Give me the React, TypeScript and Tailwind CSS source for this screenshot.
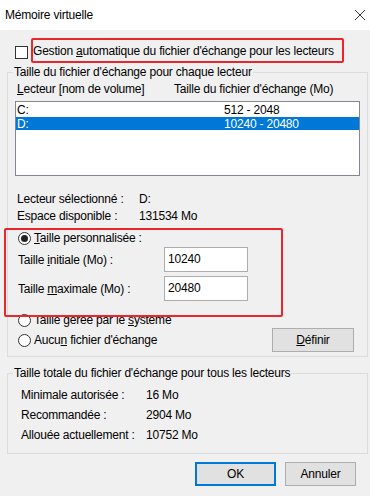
import React from 'react';

const font = "font-['Segoe_UI','Liberation_Sans',sans-serif]";

function Radio({ checked }: { checked?: boolean }) {
  return (
    <span className="flex h-[13px] w-[13px] shrink-0 items-center justify-center rounded-full border border-[#333] bg-white">
      {checked && <span className="h-[7px] w-[7px] rounded-full bg-[#222]" />}
    </span>
  );
}

function Button({ children, primary, w }: { children: React.ReactNode; primary?: boolean; w?: string }) {
  return (
    <button
      className={
        primary
          ? 'flex h-[24px] w-[81px] items-center justify-center border-2 border-[#0078d7] bg-[#e1e1e1] text-[12px]'
          : `flex h-[24px] items-center justify-center border border-[#adadad] bg-[#e1e1e1] text-[12px] ${w ?? 'w-[71px]'}`
      }
    >
      {children}
    </button>
  );
}

export default function App() {
  return (
    <div className={`${font} relative h-[496px] w-[370px] overflow-hidden bg-[#f0f0f0] text-[12px] leading-[16px] tracking-[-0.2px] text-black`}>
      {/* title bar */}
      <div className="flex h-[30px] items-center justify-between bg-white pl-[5px] pr-[4px]">
        <span>Mémoire virtuelle</span>
        <svg width="12" height="12" viewBox="0 0 12 12">
          <path d="M1 1 L11 11 M11 1 L1 11" stroke="#333" strokeWidth="1" />
        </svg>
      </div>

      <div className="pl-[7px] pr-[2px]">
        {/* automatic checkbox */}
        <div className="mt-[8px] flex h-[25px] items-center">
          <span className="ml-[8px] mr-[3px] mt-[4px] h-[13px] w-[13px] border border-[#333] bg-white" />
          <span className="flex h-[25px] items-center rounded-[2px] border-2 border-[#e8262b] pr-[8px]">
            Gestion&nbsp;<span className="underline">a</span>utomatique du fichier d'échange pour les lecteurs
          </span>
        </div>

        {/* per drive */}
        <fieldset className="mt-[1px] h-[293px] border border-[#dcdcdc]">
          <legend className="ml-[5px] px-[1px]">Taille du fichier d'échange pour chaque lecteur</legend>
          <div className="mt-[1px] flex h-[16px] pl-[9px]">
            <span className="w-[157px]">
              <span className="underline">L</span>ecteur [nom de volume]
            </span>
            <span>Taille du fichier d'échange (Mo)</span>
          </div>
          <div className="ml-[7px] mr-[7px] mt-[4px] h-[75px] border border-[#828790] bg-white pt-[1px]">
            <div className="flex h-[14px] items-center pl-[1px]">
              <span className="w-[207px]">C:</span>
              <span>512 - 2048</span>
            </div>
            <div className="flex h-[13px] items-center bg-[#0078d7] pl-[1px] text-white">
              <span className="w-[207px]">D:</span>
              <span>10240 - 20480</span>
            </div>
          </div>

          <div className="mt-[14px] pl-[9px]">
            <div className="flex h-[17px] items-center">
              <span className="w-[122px]">Lecteur sélectionné :</span>
              <span>D:</span>
            </div>
            <div className="flex h-[17px] items-center">
              <span className="w-[122px]">Espace disponible :</span>
              <span>131534 Mo</span>
            </div>
          </div>

          <div className="mt-[6px] flex h-[16px] items-center gap-[3px] pl-[10px]">
            <Radio checked />
            <span>
              <span className="underline">T</span>aille personnalisée :
            </span>
          </div>
          <div className="mt-[1px] flex h-[25px] items-center pl-[10px]">
            <span className="w-[146px]">
              Taille <span className="underline">i</span>nitiale (Mo) :
            </span>
            <span className="flex h-[25px] w-[84px] items-start border border-[#adadad] bg-white pl-[3px] pt-[3px]">10240</span>
          </div>
          <div className="mt-[4px] flex h-[25px] items-center pl-[10px]">
            <span className="w-[146px]">
              Taille <span className="underline">m</span>aximale (Mo) :
            </span>
            <span className="flex h-[25px] w-[84px] items-start border border-[#adadad] bg-white pl-[3px] pt-[3px]">20480</span>
          </div>

          <div className="mt-[11px] flex h-[16px] items-center gap-[3px] pl-[10px]">
            <Radio />
            <span>
              Taille gérée par le <span className="underline">s</span>ystème
            </span>
          </div>
          <div className="flex items-center justify-between pl-[10px] pr-[13px]">
            <div className="flex h-[16px] items-center gap-[3px]">
              <Radio />
              <span>
                Aucu<span className="underline">n</span> fichier d'échange
              </span>
            </div>
            <Button w="w-[82px]">
              <span className="underline">D</span>éfinir
            </Button>
          </div>
        </fieldset>

        {/* total */}
        <fieldset className="mt-[8px] h-[89px] border border-[#dcdcdc]">
          <legend className="ml-[5px] px-[1px]">Taille totale du fichier d'échange pour tous les lecteurs</legend>
          <div className="mt-[4px] pl-[13px]">
            <div className="flex h-[20px] items-center">
              <span className="w-[125px]">Minimale autorisée :</span>
              <span>16 Mo</span>
            </div>
            <div className="flex h-[20px] items-center">
              <span className="w-[125px]">Recommandée :</span>
              <span>2904 Mo</span>
            </div>
            <div className="flex h-[20px] items-center">
              <span className="w-[125px]">Allouée actuellement :</span>
              <span>10752 Mo</span>
            </div>
          </div>
        </fieldset>

        <div className="mt-[8px] flex justify-end gap-[9px] pr-[12px]">
          <Button primary>OK</Button>
          <Button>Annuler</Button>
        </div>
      </div>

      {/* annotation box */}
      <div className="pointer-events-none absolute left-[4px] top-[228px] h-[89px] w-[279px] rounded-[2px] border-2 border-[#e8262b]" />
    </div>
  );
}
